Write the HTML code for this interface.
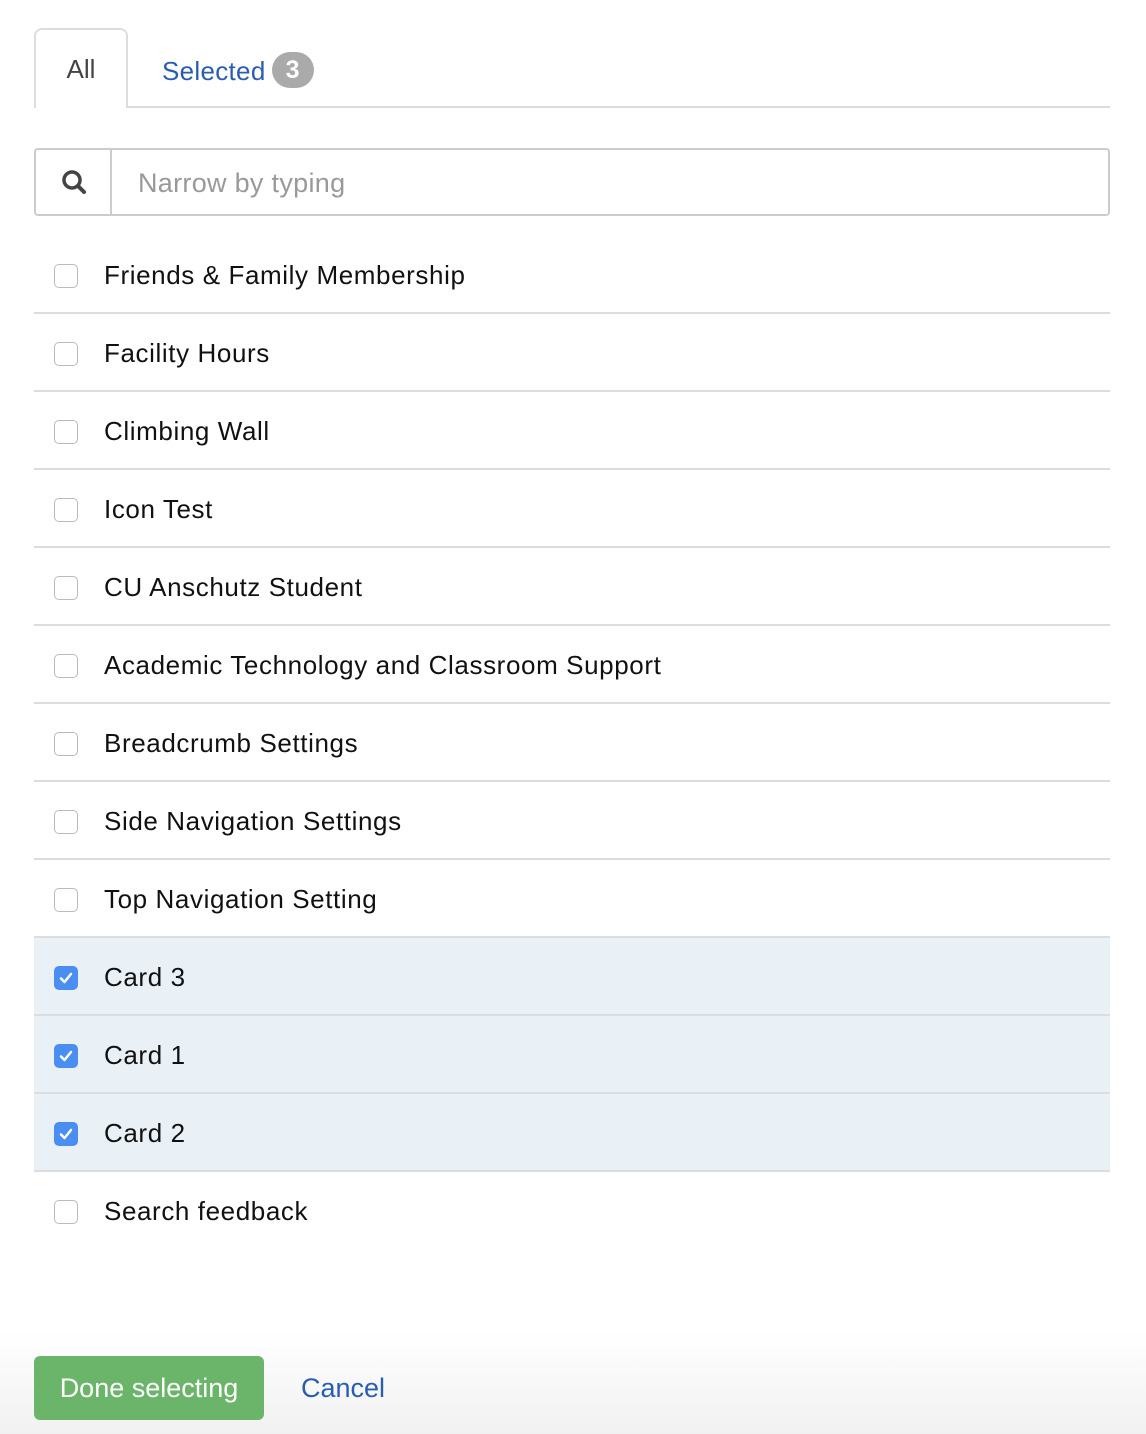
<!DOCTYPE html>
<html><head><style>
*{box-sizing:border-box;margin:0;padding:0}
body{width:1146px;height:1434px;background:#fff;font-family:"Liberation Sans",sans-serif;position:relative;overflow:hidden}
.tab{position:absolute;left:34px;top:28px;width:94px;height:80px;border:2px solid #ddd;border-bottom:none;border-radius:8px 8px 0 0;background:#fff;font-size:26px;color:#444;text-align:center;line-height:78px;z-index:2}
.tabline{position:absolute;left:34px;top:106px;width:1076px;height:2px;background:#ddd}
.sel{position:absolute;left:162px;top:52px;font-size:26px;color:#2a5db0;letter-spacing:0.3px}
.badge{display:inline-block;width:42px;height:36px;border-radius:18px;background:#aaa;color:#fff;text-align:center;line-height:36px;font-weight:bold;vertical-align:2px;margin-left:6px;font-size:25px;letter-spacing:0}
.search{position:absolute;left:34px;top:148px;width:1076px;height:68px;border:2px solid #ccc;border-radius:4px}
.search .ic{position:absolute;left:0;top:0;width:76px;height:64px;border-right:2px solid #ccc}
.search .ph{position:absolute;left:102px;top:18px;font-size:27px;color:#999;letter-spacing:0.3px}
.row{position:absolute;left:34px;width:1076px;height:78px;border-bottom:2px solid #ddd}
.row.on{background:#e9f1f7}
.cb{position:absolute;left:20px;top:28px;width:24px;height:24px;border:1.5px solid #bbb;border-radius:5px;background:#fff}
.on .cb{background:#4b8ef2;border-color:#4b8ef2}
.row span{position:absolute;left:70px;top:24px;font-size:26px;color:#111;letter-spacing:0.6px}
.fade{position:absolute;left:0;top:1330px;width:1146px;height:104px;background:linear-gradient(#fff,#f1f1f1)}
.btn{position:absolute;left:34px;top:1356px;width:230px;height:64px;background:#6bb56b;border-radius:6px;color:#fff;font-size:27px;text-align:center;line-height:64px}
.cancel{position:absolute;left:301px;top:1373px;font-size:27px;color:#2a5db0}
</style></head><body>
<div class="tab">All</div>
<div class="tabline"></div>
<div class="sel">Selected<span class="badge">3</span></div>
<div class="search"><div class="ic"><svg width="76" height="64"><circle cx="36" cy="30" r="8" fill="none" stroke="#444" stroke-width="3.5"/><line x1="42" y1="36" x2="48" y2="42" stroke="#444" stroke-width="4" stroke-linecap="round"/></svg></div><div class="ph">Narrow by typing</div></div>
<div class="row" style="top:236px"><div class="cb"></div><span>Friends &amp; Family Membership</span></div>
<div class="row" style="top:314px"><div class="cb"></div><span>Facility Hours</span></div>
<div class="row" style="top:392px"><div class="cb"></div><span>Climbing Wall</span></div>
<div class="row" style="top:470px"><div class="cb"></div><span>Icon Test</span></div>
<div class="row" style="top:548px"><div class="cb"></div><span>CU Anschutz Student</span></div>
<div class="row" style="top:626px"><div class="cb"></div><span>Academic Technology and Classroom Support</span></div>
<div class="row" style="top:704px"><div class="cb"></div><span>Breadcrumb Settings</span></div>
<div class="row" style="top:782px"><div class="cb"></div><span>Side Navigation Settings</span></div>
<div class="row" style="top:860px"><div class="cb"></div><span>Top Navigation Setting</span></div>
<div class="row on" style="top:938px"><div class="cb"><svg width="22" height="22" style="position:absolute;left:0;top:0"><path d="M6 11.5l3.5 3.5L16 7" fill="none" stroke="#fff" stroke-width="2.5" stroke-linecap="round" stroke-linejoin="round"/></svg></div><span>Card 3</span></div>
<div class="row on" style="top:1016px"><div class="cb"><svg width="22" height="22" style="position:absolute;left:0;top:0"><path d="M6 11.5l3.5 3.5L16 7" fill="none" stroke="#fff" stroke-width="2.5" stroke-linecap="round" stroke-linejoin="round"/></svg></div><span>Card 1</span></div>
<div class="row on" style="top:1094px"><div class="cb"><svg width="22" height="22" style="position:absolute;left:0;top:0"><path d="M6 11.5l3.5 3.5L16 7" fill="none" stroke="#fff" stroke-width="2.5" stroke-linecap="round" stroke-linejoin="round"/></svg></div><span>Card 2</span></div>
<div class="row" style="top:1172px;border-bottom:none"><div class="cb"></div><span>Search feedback</span></div>
<div class="fade"></div>
<div class="btn">Done selecting</div>
<div class="cancel">Cancel</div>
</body></html>
